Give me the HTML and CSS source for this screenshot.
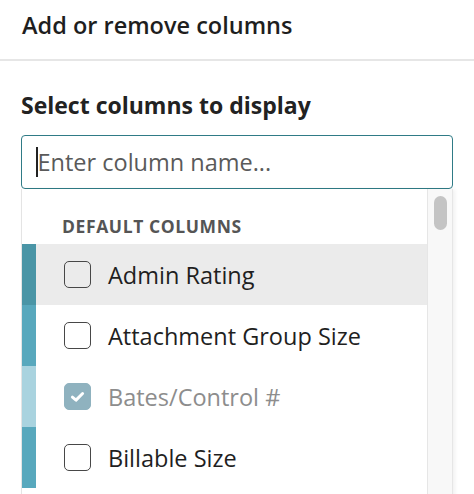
FILE: index.html
```html
<!DOCTYPE html>
<html>
<head>
<meta charset="utf-8">
<link rel="stylesheet" href="styles.css">
</head>
<body>
<div class="panel">
  <div class="header"><span class="title">Add or remove columns</span></div>
  <div class="content">
    <div class="subtitle">Select columns to display</div>
    <div class="search"><span class="caret"></span><span class="placeholder">Enter column name...</span></div>
    <div class="dropdown">
      <div class="list">
        <div class="group">DEFAULT COLUMNS</div>
        <div class="row hover"><span class="accent"></span><span class="item"><span class="box"></span><span class="label">Admin Rating</span></span></div>
        <div class="row"><span class="accent"></span><span class="item"><span class="box"></span><span class="label">Attachment Group Size</span></span></div>
        <div class="row disabled"><span class="accent"></span><span class="item"><span class="box checked"><svg viewBox="0 0 16 16" width="17" height="17"><path d="M3.2 8.6 L6.6 11.4 L12.8 5.2" fill="none" stroke="#fff" stroke-width="2.8" stroke-linecap="round" stroke-linejoin="round"/></svg></span><span class="label">Bates/Control #</span></span></div>
        <div class="row"><span class="accent"></span><span class="item"><span class="box"></span><span class="label">Billable Size</span></span></div>
      </div>
      <div class="scrollbar"><span class="thumb"></span></div>
    </div>
  </div>
</div>
</body>
</html>
```
FILE: styles.css
```css
html, body {
  margin: 0;
  padding: 0;
  background: #fff;
}
body {
  font-family: "Open Sans", "Liberation Sans", sans-serif;
  color: #222;
  overflow: hidden;
  height: 494px;
}
.header {
  border-bottom: 2px solid #e6e6e6;
  padding-left: 22px;
  display: flex;
  align-items: center;
  box-sizing: border-box;
  height: 61px;
}
.title {
  font-size: 23.5px;
  font-weight: 600;
  color: #1e1e1e;
  margin-top: -10px;
}
.content {
  padding: 0 21px;
}
.subtitle {
  font-size: 23px;
  font-weight: 700;
  color: #222;
  margin-top: 29px;
  line-height: 30px;
}
.search {
  margin-top: 15px;
  height: 54px;
  box-sizing: border-box;
  border: 1.5px solid #2f7b86;
  border-radius: 4px;
  display: flex;
  align-items: center;
  padding-left: 14px;
}
.caret {
  width: 1.5px;
  height: 30px;
  background: #222;
}
.placeholder {
  font-size: 23.5px;
  color: #5a5a5a;
}
.dropdown {
  display: flex;
  border-left: 1px solid #e4e4e4;
  box-shadow: 2px 0 4px rgba(0,0,0,0.06);
  height: 320px;
}
.list {
  flex: 1;
}
.group {
  height: 55px;
  box-sizing: border-box;
  display: flex;
  align-items: center;
  padding-left: 40px;
  padding-top: 18px;
  font-size: 17.5px;
  font-weight: 700;
  color: #555;
  letter-spacing: 0.6px;
}
.row {
  height: 61px;
  display: flex;
}
.accent {
  width: 14px;
  background: #58a8bd;
  flex: none;
}
.row.hover .accent {
  background: #4a95a6;
}
.row.disabled .accent {
  background: #a9d3df;
}
.item {
  flex: 1;
  display: flex;
  align-items: center;
  padding-left: 28px;
}
.row.hover .item {
  background: #ebebeb;
}
.box {
  width: 27px;
  height: 27px;
  box-sizing: border-box;
  border: 1.5px solid #474747;
  border-radius: 5px;
  flex: none;
  display: flex;
  align-items: center;
  justify-content: center;
}
.box.checked {
  background: #8fb2bf;
  border-color: #8fb2bf;
}
.label {
  margin-left: 17px;
  font-size: 23.5px;
  color: #1f1f1f;
}
.row.disabled .label {
  color: #8d8d8d;
}
.scrollbar {
  width: 26px;
  flex: none;
  background: #f8f8f8;
  border-left: 1px solid #e6e6e6;
  border-right: 1px solid #e6e6e6;
  box-sizing: border-box;
  display: flex;
  justify-content: center;
}
.thumb {
  margin-top: 7px;
  width: 13px;
  height: 34px;
  border-radius: 7px;
  background: #c4c4c4;
}
```
